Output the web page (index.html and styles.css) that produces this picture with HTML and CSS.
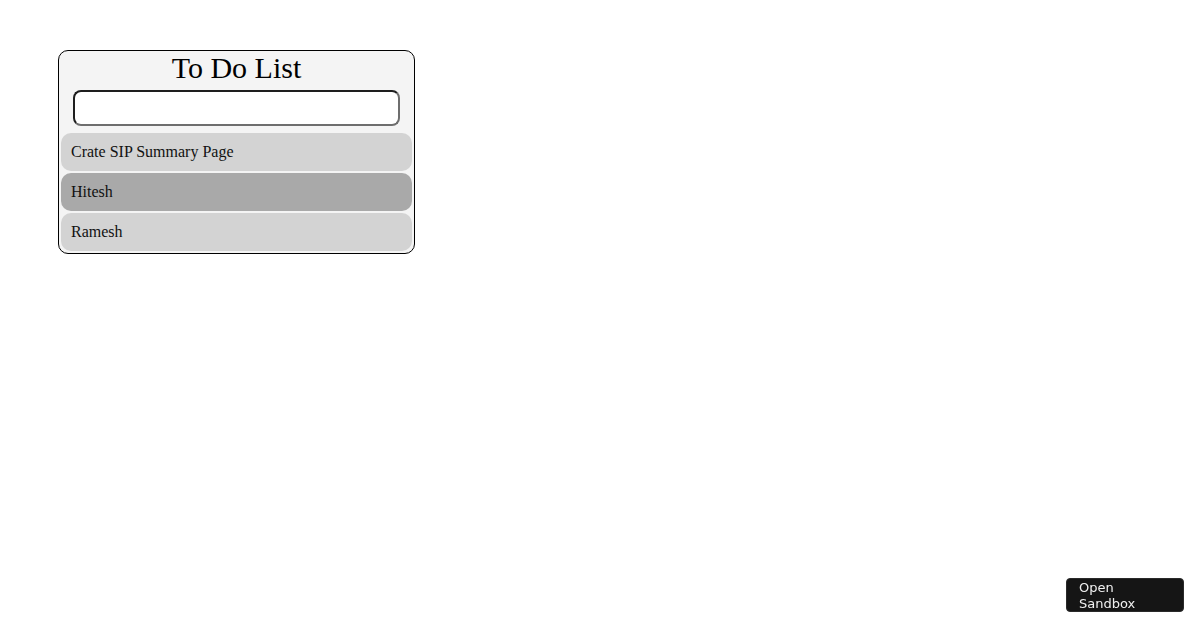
FILE: index.html
```html
<!DOCTYPE html>
<html lang="en">
<head>
<meta charset="utf-8">
<title>To Do List</title>
<link rel="stylesheet" href="styles.css">
</head>
<body>
<div class="page">
  <div class="todo">
    <h1 class="todo-title">To Do List</h1>
    <div class="todo-input-wrap">
      <input class="todo-input" type="text">
    </div>
    <ul class="todo-list">
      <li class="todo-item">Crate SIP Summary Page</li>
      <li class="todo-item todo-item-hover">Hitesh</li>
      <li class="todo-item">Ramesh</li>
    </ul>
  </div>
</div>
<a class="sandbox-btn">Open Sandbox</a>
</body>
</html>
```
FILE: styles.css
```css
html, body {
  margin: 0;
  padding: 0;
  background: #ffffff;
}

body {
  font-family: "Liberation Serif", "Times New Roman", serif;
  color: #000;
}

.page {
  padding: 50px 58px;
}

.todo {
  box-sizing: border-box;
  width: 357px;
  border: 1px solid #000;
  border-radius: 10px;
  background: #f4f4f4;
  padding: 2px;
}

.todo-title {
  margin: 0;
  font-size: 30px;
  line-height: 30px;
  font-weight: normal;
  text-align: center;
  color: #000;
}

.todo-input-wrap {
  padding: 0 12px;
  margin-top: 7px;
}

.todo-input {
  display: block;
  box-sizing: border-box;
  width: 100%;
  height: 36px;
  margin: 0;
  border-width: 2px;
  border-style: solid;
  border-color: #1e1e1e #6e6e6e #6e6e6e #1e1e1e;
  border-radius: 8px;
  background: #fff;
  outline: none;
}

.todo-list {
  list-style: none;
  margin: 7px 0 0;
  padding: 0;
  display: flex;
  flex-direction: column;
  gap: 2px;
}

.todo-item {
  height: 38px;
  line-height: 38px;
  padding: 0 10px;
  border-radius: 10px;
  background: #d3d3d3;
  font-size: 16px;
  color: #111;
}

.todo-item-hover {
  background: #a9a9a9;
}

.sandbox-btn {
  position: fixed;
  right: 16px;
  bottom: 18px;
  box-sizing: border-box;
  width: 118px;
  height: 34px;
  padding: 1px 12px;
  border-radius: 4px;
  background: #151515;
  border: 1px solid #2a2a2a;
  color: #f0f0f0;
  font-family: "DejaVu Sans", sans-serif;
  font-size: 13px;
  line-height: 16px;
  text-decoration: none;
}
```
